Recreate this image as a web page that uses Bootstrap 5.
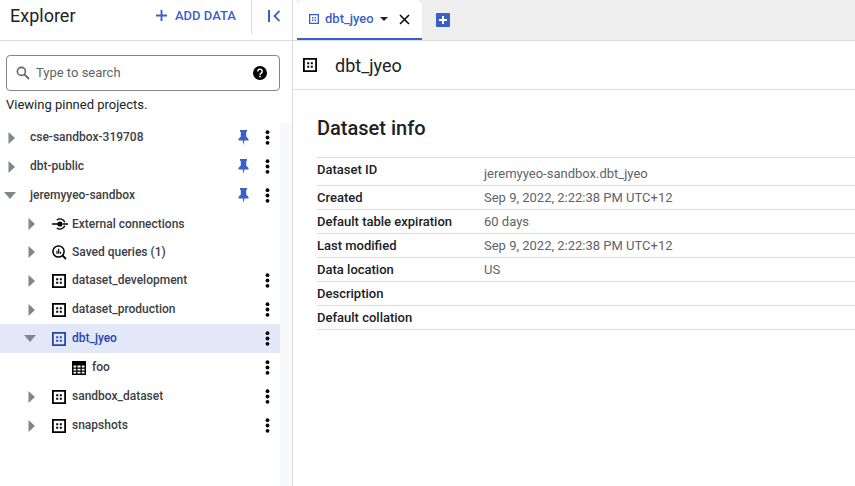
<!DOCTYPE html>
<html lang="en"><head><meta charset="utf-8"><title>Explorer</title>
<link rel="stylesheet" href="https://cdn.jsdelivr.net/npm/bootstrap@5.3.0/dist/css/bootstrap.min.css">
<style>
html,body{height:486px;overflow:hidden}
body{font-family:Roboto,"Liberation Sans",sans-serif;color:#202124;background:#fff}
.shell{height:486px}
.side{width:293px;flex:none;border-right:1px solid #dadce0}
.side-head{height:41px;border-bottom:1px solid #dadce0;padding-left:10px}
.side-title{font-size:18px;line-height:24px;margin-top:-8px}
.add-btn{color:#3b5fc9;font-size:13px;font-weight:500;margin-left:auto;width:79px;margin-top:-9px;flex:none;white-space:nowrap}
.add-sep{width:1px;height:34px;background:#dadce0;margin-left:16px;align-self:flex-start}
.col-btn{width:40px;margin-top:-9px;padding-left:16px}
.searchbox{margin:14px 12px 0 6px;height:36px;border:1px solid #80868b;border-radius:4px;padding:0 12px 0 9px;font-size:13px;color:#5f6368}
.search-ic{margin-right:6px;flex:none}
.view-note{font-size:13px;line-height:16px;margin:6px 0 0 6px;height:18px}
.tree-wrap{margin-top:8px;background:linear-gradient(to right,#fff 280px,#f8f9fa 280px);height:363px}
.tree-row{height:29px;width:280px;font-size:12px;font-weight:500;color:#3c4043}
.tree-row.short{height:28px}
.tree-row.on{background:#e2e8f7;color:#2746ab}
.tw{width:30px;flex:none;display:flex;padding-left:8px}
.tw.open{padding-left:4px}
.tw1{width:52px;padding-left:28px}
.tw1.open{padding-left:24px}
.tw2{width:72px}
.ic{width:20px;flex:none;display:flex;justify-content:flex-start}
.ic.blue{fill:#2746ab}
.nm{flex:1;padding-bottom:1px}
.pin{width:11px;flex:none;margin-right:16px}
.dots{width:5px;flex:none;margin-right:10px}
.main{min-width:0}
.tabbar{height:41px;border-bottom:1px solid #dadce0;background:linear-gradient(to right,#fff 4px,#eee 4px)}
.tabx{margin-left:4px;width:125px;height:40px;background:#fff;border-bottom:2px solid #3b5fc9;border-radius:6px 6px 0 0;color:#3b5fc9;font-size:13px;font-weight:500;padding-left:12px;fill:#3b5fc9}
.tab-ic{margin-right:6px}
.tab-caret{margin-left:6px}
.tab-x{margin-left:11px}
.plus{width:14px;height:14px;background:#3b5fc9;border-radius:1px;margin-left:14px}
.ds-head{height:49px;border-bottom:1px solid #dadce0;padding-left:10px;font-size:18px}
.ds-head span{margin-left:18px}
.info{padding:0 0 0 24px}
.info-title{font-size:20px;font-weight:500;line-height:24px;margin:26px 0 17px;color:#202124}
.info-row{border-top:1px solid #dadce0;font-size:13px;height:24px;line-height:23px}
.info-row.tall{height:28px}
.info-row.last{border-bottom:1px solid #dadce0;height:25px}
.k{width:167px;flex:none;font-weight:500;color:#202124}
.v{color:#5f6368}
.tall .v{padding-top:4px}
</style></head><body>
<svg width="0" height="0" class="position-absolute"><defs>
<symbol id="tri-r" viewBox="0 0 7 12"><path d="M.5 0l6.5 6-6.5 6z" fill="#80868b"/></symbol>
<symbol id="tri-d" viewBox="0 0 12 7"><path d="M0 0h12L6 7z" fill="#80868b"/></symbol>
<symbol id="more" viewBox="0 0 5 15"><circle cx="2.5" cy="2.2" r="1.9"/><circle cx="2.5" cy="7.5" r="1.9"/><circle cx="2.5" cy="12.8" r="1.9"/></symbol>
<symbol id="pinic" viewBox="0 0 11 15"><path d="M2 0h7v1.4L8.2 2.2v4.4L10.5 9v1.4H6.3L5.5 15l-.8-4.6H.5V9l2.3-2.4V2.2L2 1.4z" fill="#3b5fc9"/></symbol>
<symbol id="ds" viewBox="0 0 14 14"><path fill-rule="evenodd" d="M0 0h14v14H0zM1.8 1.8v10.4h10.4V1.8z"/><path d="M4.2 4.2h2v2h-2zM7.8 4.2h2v2h-2zM4.2 7.8h2v2h-2zM7.8 7.8h2v2h-2z"/></symbol>
</defs></svg>
<div class="shell d-flex">
 <aside class="side">
  <div class="side-head d-flex align-items-center">
   <div class="side-title">Explorer</div>
   <div class="add-btn d-flex align-items-center gap-2"><svg width="11" height="11" viewBox="0 0 12 12" class="flex-shrink-0"><path d="M5 0h2v5h5v2H7v5H5V7H0V5h5z" fill="#3b5fc9"/></svg>ADD DATA</div>
   <div class="add-sep"></div>
   <div class="col-btn"><svg width="12" height="12" viewBox="0 0 12 12" class="d-block"><path d="M0 0h2v12H0z" fill="#3b5fc9"/><path d="M11.5 1L6.5 6l5 5" fill="none" stroke="#3b5fc9" stroke-width="1.8"/></svg></div>
  </div>
  <div class="searchbox d-flex align-items-center">
   <svg width="14" height="14" viewBox="0 0 14 14" class="search-ic"><circle cx="5.4" cy="5.4" r="4" fill="none" stroke="#5f6368" stroke-width="1.6"/><path d="M8.4 8.4L13 13" stroke="#5f6368" stroke-width="1.8"/></svg>
   <span>Type to search</span>
   <svg width="14" height="14" viewBox="0 0 14 14" class="ms-auto"><circle cx="7" cy="7" r="7" fill="#000"/><path d="M4.8 5.4a2.2 2.2 0 1 1 3.4 1.8c-.8.5-1.2.9-1.2 1.6" fill="none" stroke="#fff" stroke-width="1.5"/><rect x="6.2" y="9.7" width="1.6" height="1.6" fill="#fff"/></svg>
  </div>
  <div class="view-note">Viewing pinned projects.</div>
  <div class="tree-wrap">
   <div class="tree-row d-flex align-items-center"><div class="tw"><svg width="7" height="12"><use href="#tri-r"/></svg></div><div class="nm">cse-sandbox-319708</div><svg class="pin" width="11" height="15"><use href="#pinic"/></svg><svg class="dots" width="5" height="15"><use href="#more"/></svg></div>
   <div class="tree-row d-flex align-items-center"><div class="tw"><svg width="7" height="12"><use href="#tri-r"/></svg></div><div class="nm">dbt-public</div><svg class="pin" width="11" height="15"><use href="#pinic"/></svg><svg class="dots" width="5" height="15"><use href="#more"/></svg></div>
   <div class="tree-row d-flex align-items-center"><div class="tw open"><svg width="12" height="7"><use href="#tri-d"/></svg></div><div class="nm">jeremyyeo-sandbox</div><svg class="pin" width="11" height="15"><use href="#pinic"/></svg><svg class="dots" width="5" height="15"><use href="#more"/></svg></div>
   <div class="tree-row short d-flex align-items-center"><div class="tw tw1"><svg width="7" height="12"><use href="#tri-r"/></svg></div><div class="ic"><svg width="16" height="14" viewBox="0 0 16 14"><circle cx="8" cy="7" r="2.6"/><path d="M0 6.2h6v1.6H0zM11 6.2h5v1.6h-5z"/><path d="M4.8 3a5.2 5.2 0 0 1 8 2.2M4.8 11a5.2 5.2 0 0 0 8-2.2" fill="none" stroke="#000" stroke-width="1.4"/></svg></div><div class="nm">External connections</div></div>
   <div class="tree-row short d-flex align-items-center"><div class="tw tw1"><svg width="7" height="12"><use href="#tri-r"/></svg></div><div class="ic"><svg width="15" height="15" viewBox="0 0 15 15"><circle cx="6.5" cy="6.5" r="5.6" fill="none" stroke="#000" stroke-width="1.5"/><path d="M10.2 10.2L14 14" stroke="#000" stroke-width="1.8"/><path d="M4.4 5.8h1.2v3H4.4zM6.1 3.8h1.2v5H6.1zM7.9 6.8h1.2v2H7.9z" fill="#000"/></svg></div><div class="nm">Saved queries (1)</div></div>
   <div class="tree-row d-flex align-items-center"><div class="tw tw1"><svg width="7" height="12"><use href="#tri-r"/></svg></div><div class="ic"><svg width="14" height="14"><use href="#ds"/></svg></div><div class="nm">dataset_development</div><svg class="dots" width="5" height="15"><use href="#more"/></svg></div>
   <div class="tree-row d-flex align-items-center"><div class="tw tw1"><svg width="7" height="12"><use href="#tri-r"/></svg></div><div class="ic"><svg width="14" height="14"><use href="#ds"/></svg></div><div class="nm">dataset_production</div><svg class="dots" width="5" height="15"><use href="#more"/></svg></div>
   <div class="tree-row on d-flex align-items-center"><div class="tw tw1 open"><svg width="12" height="7"><use href="#tri-d"/></svg></div><div class="ic blue"><svg width="14" height="14"><use href="#ds"/></svg></div><div class="nm">dbt_jyeo</div><svg class="dots" width="5" height="15"><use href="#more"/></svg></div>
   <div class="tree-row d-flex align-items-center"><div class="tw tw2"></div><div class="ic"><svg width="14" height="14" viewBox="0 0 14 14"><path fill-rule="evenodd" d="M0 0h14v14H0zM1.5 4.5v2h2.7v-2zM5.5 4.5v2h3v-2zM9.8 4.5v2h2.7v-2zM1.5 7.7v1.8h2.7v-1.8zM5.5 7.7v1.8h3v-1.8zM9.8 7.7v1.8h2.7v-1.8zM1.5 10.7v1.8h2.7v-1.8zM5.5 10.7v1.8h3v-1.8zM9.8 10.7v1.8h2.7v-1.8z"/></svg></div><div class="nm">foo</div><svg class="dots" width="5" height="15"><use href="#more"/></svg></div>
   <div class="tree-row d-flex align-items-center"><div class="tw tw1"><svg width="7" height="12"><use href="#tri-r"/></svg></div><div class="ic"><svg width="14" height="14"><use href="#ds"/></svg></div><div class="nm">sandbox_dataset</div><svg class="dots" width="5" height="15"><use href="#more"/></svg></div>
   <div class="tree-row d-flex align-items-center"><div class="tw tw1"><svg width="7" height="12"><use href="#tri-r"/></svg></div><div class="ic"><svg width="14" height="14"><use href="#ds"/></svg></div><div class="nm">snapshots</div><svg class="dots" width="5" height="15"><use href="#more"/></svg></div>
  </div>
 </aside>
 <main class="main flex-grow-1">
  <div class="tabbar d-flex align-items-center">
   <div class="tabx d-flex align-items-center">
    <svg width="10" height="10" class="tab-ic"><use href="#ds"/></svg><span>dbt_jyeo</span>
    <svg width="8" height="4" viewBox="0 0 8 4" class="tab-caret"><path d="M0 0h8L4 4z" fill="#202124"/></svg>
    <svg width="11" height="11" viewBox="0 0 11 11" class="tab-x"><path d="M1 1l9 9M10 1l-9 9" stroke="#000" stroke-width="1.5"/></svg>
   </div>
   <div class="plus d-flex align-items-center justify-content-center"><svg width="8" height="8" viewBox="0 0 8 8"><path d="M3 0h2v3h3v2H5v3H3V5H0V3h3z" fill="#fff"/></svg></div>
  </div>
  <div class="ds-head d-flex align-items-center"><svg width="14" height="14"><use href="#ds"/></svg><span>dbt_jyeo</span></div>
  <div class="info">
   <div class="info-title">Dataset info</div>
   <div class="info-row tall d-flex"><div class="k">Dataset ID</div><div class="v">jeremyyeo-sandbox.dbt_jyeo</div></div>
   <div class="info-row d-flex"><div class="k">Created</div><div class="v">Sep 9, 2022, 2:22:38 PM UTC+12</div></div>
   <div class="info-row d-flex"><div class="k">Default table expiration</div><div class="v">60 days</div></div>
   <div class="info-row d-flex"><div class="k">Last modified</div><div class="v">Sep 9, 2022, 2:22:38 PM UTC+12</div></div>
   <div class="info-row d-flex"><div class="k">Data location</div><div class="v">US</div></div>
   <div class="info-row d-flex"><div class="k">Description</div><div class="v"></div></div>
   <div class="info-row last d-flex"><div class="k">Default collation</div><div class="v"></div></div>
  </div>
 </main>
</div>
</body></html>
